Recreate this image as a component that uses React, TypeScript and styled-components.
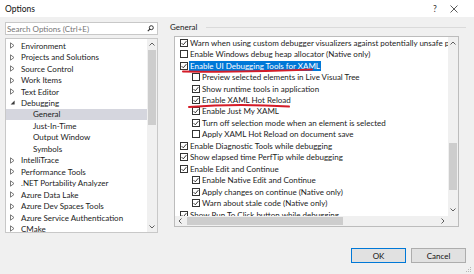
import * as React from 'react';
import styled, { createGlobalStyle } from 'styled-components';

const GlobalStyle = createGlobalStyle`
  html, body {
    margin: 0;
    padding: 0;
  }
  body {
    font-family: Lato, "Liberation Sans", sans-serif;
    background: #f0f0f0;
  }
`;

const Window = styled.div`
  position: relative;
  width: 474px;
  height: 274px;
  background: #f0f0f0;
  display: flex;
  flex-direction: column;
  overflow: hidden;
  font-size: 8px;
  color: #1b1b1b;
`;

const TitleBar = styled.div`
  height: 17px;
  flex: none;
  background: #fff;
  display: flex;
  align-items: center;
  padding: 0 13px 0 5px;
  font-size: 8.5px;
  color: #111;
`;

const TitleText = styled.span`
  flex: 1;
`;

const TitleButton = styled.span`
  width: 14px;
  height: 17px;
  display: flex;
  align-items: center;
  justify-content: center;
  color: #333;
  margin-left: 5px;
`;

const Body = styled.div`
  display: flex;
  align-items: flex-start;
  padding: 5px 8px 0 5px;
`;

const LeftPane = styled.div`
  width: 153px;
  flex: none;
  display: flex;
  flex-direction: column;
  gap: 3px;
`;

const SearchBox = styled.div`
  height: 13px;
  box-sizing: border-box;
  border: 1px solid #c8c8c8;
  background: #fff;
  display: flex;
  align-items: center;
  justify-content: space-between;
  padding: 0 3px 0 1px;
  color: #767676;
`;

const TreeBox = styled.div`
  height: 195px;
  box-sizing: border-box;
  border: 1px solid #c8c8c8;
  background: #fff;
  display: grid;
  grid-template-columns: 1fr 10px;
`;

const TreeList = styled.div`
  overflow: hidden;
  padding-top: 1px;
`;

const TreeRow = styled.div<{ $level: number; $selected?: boolean }>`
  height: 11.46px;
  display: flex;
  align-items: center;
  gap: 6px;
  padding-left: ${p => 4 + p.$level * 12}px;
  background: ${p => (p.$selected ? '#d5d6de' : 'transparent')};
  white-space: nowrap;
  line-height: 10px;
`;

const Expander = styled.span`
  width: 5px;
  height: 7px;
  flex: none;
  display: flex;
  align-items: center;
`;

const VScroll = styled.div`
  display: flex;
  flex-direction: column;
  background: #f0f0f0;
`;

const HScroll = styled.div`
  display: flex;
  background: #f0f0f0;
`;

const ScrollButton = styled.div<{ $size: number }>`
  flex: 0 0 ${p => p.$size}px;
  display: flex;
  align-items: center;
  justify-content: center;
`;

const Track = styled.div<{ $horizontal?: boolean }>`
  flex: 1;
  display: flex;
  flex-direction: ${p => (p.$horizontal ? 'row' : 'column')};
  overflow: hidden;
`;

const Thumb = styled.div<{ $offset: number; $length: number; $horizontal?: boolean }>`
  flex: none;
  background: #cdcdcd;
  ${p =>
    p.$horizontal
      ? `margin: 1px 0 1px ${p.$offset}px; width: ${p.$length}px;`
      : `margin: ${p.$offset}px 1px 0 1px; height: ${p.$length}px;`}
`;

const Corner = styled.div`
  background: #f0f0f0;
`;

const RightPane = styled.div`
  flex: 1;
  margin-left: 12px;
  display: flex;
  flex-direction: column;
  gap: 4px;
`;

const GroupHeader = styled.div`
  height: 10px;
  display: flex;
  align-items: center;
`;

const GroupLine = styled.div`
  flex: 1;
  margin: 1px 0 0 9px;
  border-top: 1px solid #dadada;
`;

const ListBox = styled.div`
  margin: 0 7px 0 4px;
  height: 191px;
  box-sizing: border-box;
  border: 1px solid #bcbcbc;
  background: #fff;
  display: grid;
  grid-template-columns: 1fr 10px;
  grid-template-rows: 1fr 10px;
`;

const CheckList = styled.div`
  overflow: hidden;
`;

const CheckRow = styled.div<{ $level: number }>`
  height: 11.46px;
  display: flex;
  align-items: center;
  gap: 1px;
  padding-left: ${p => 5 + p.$level * 12}px;
  white-space: nowrap;
`;

const Box = styled.span`
  width: 8px;
  height: 8px;
  box-sizing: border-box;
  border: 1px solid #333;
  background: #fff;
  flex: none;
  display: flex;
  align-items: center;
  justify-content: center;
`;

const Label = styled.span<{ $selected?: boolean }>`
  padding: 0 1px;
  line-height: 10px;
  background: ${p => (p.$selected ? '#0078d7' : 'transparent')};
  color: ${p => (p.$selected ? '#fff' : 'inherit')};
`;

const Footer = styled.div`
  display: flex;
  justify-content: flex-end;
  gap: 5px;
  padding: 15px 8px 0 0;
`;

const DialogButton = styled.button<{ $primary?: boolean }>`
  width: 55px;
  height: 15px;
  box-sizing: border-box;
  padding: 0;
  border: 1px solid ${p => (p.$primary ? '#0078d7' : '#adadad')};
  background: #e1e1e1;
  font-family: inherit;
  font-size: 8px;
  color: #111;
`;

const Overlay = styled.svg`
  position: absolute;
  top: 0;
  left: 0;
  pointer-events: none;
`;

type Dir = 'up' | 'down' | 'left' | 'right';

const chevronPaths: Record<Dir, string> = {
  up: 'M0.5 3.5 L3 1 L5.5 3.5',
  down: 'M0.5 0.5 L3 3 L5.5 0.5',
  left: 'M3.5 0.5 L1 3 L3.5 5.5',
  right: 'M0.5 0.5 L3 3 L0.5 5.5',
};

const Chevron = ({ dir }: { dir: Dir }) => {
  const vertical = dir === 'up' || dir === 'down';
  return (
    <svg width={vertical ? 6 : 4} height={vertical ? 4 : 6} viewBox={vertical ? '0 0 6 4' : '0 0 4 6'}>
      <path d={chevronPaths[dir]} stroke="#5f5f5f" strokeWidth="1" fill="none" />
    </svg>
  );
};

const CheckBox = ({ checked }: { checked: boolean }) => (
  <Box>
    {checked && (
      <svg width="6" height="6" viewBox="0 0 6 6">
        <path d="M0.6 3.1 L2.3 4.8 L5.4 1.1" stroke="#222" strokeWidth="0.9" fill="none" />
      </svg>
    )}
  </Box>
);

const treeItems = [
  { label: 'Environment', level: 0, state: 'closed' },
  { label: 'Projects and Solutions', level: 0, state: 'closed' },
  { label: 'Source Control', level: 0, state: 'closed' },
  { label: 'Work Items', level: 0, state: 'closed' },
  { label: 'Text Editor', level: 0, state: 'closed' },
  { label: 'Debugging', level: 0, state: 'open' },
  { label: 'General', level: 1, state: 'leaf', selected: true },
  { label: 'Just-In-Time', level: 1, state: 'leaf' },
  { label: 'Output Window', level: 1, state: 'leaf' },
  { label: 'Symbols', level: 1, state: 'leaf' },
  { label: 'IntelliTrace', level: 0, state: 'closed' },
  { label: 'Performance Tools', level: 0, state: 'closed' },
  { label: '.NET Portability Analyzer', level: 0, state: 'closed' },
  { label: 'Azure Data Lake', level: 0, state: 'closed' },
  { label: 'Azure Dev Spaces Tools', level: 0, state: 'closed' },
  { label: 'Azure Service Authentication', level: 0, state: 'closed' },
  { label: 'CMake', level: 0, state: 'closed' },
];

const options = [
  { label: 'Warn when using custom debugger visualizers against potentially unsafe processes (Managed only)', level: 0, checked: true },
  { label: 'Enable Windows debug heap allocator (Native only)', level: 0, checked: false },
  { label: 'Enable UI Debugging Tools for XAML', level: 0, checked: true, selected: true },
  { label: 'Preview selected elements in Live Visual Tree', level: 1, checked: false },
  { label: 'Show runtime tools in application', level: 1, checked: true },
  { label: 'Enable XAML Hot Reload', level: 1, checked: true },
  { label: 'Enable Just My XAML', level: 1, checked: true },
  { label: 'Turn off selection mode when an element is selected', level: 1, checked: true },
  { label: 'Apply XAML Hot Reload on document save', level: 1, checked: false },
  { label: 'Enable Diagnostic Tools while debugging', level: 0, checked: true },
  { label: 'Show elapsed time PerfTip while debugging', level: 0, checked: true },
  { label: 'Enable Edit and Continue', level: 0, checked: true },
  { label: 'Enable Native Edit and Continue', level: 1, checked: true },
  { label: 'Apply changes on continue (Native only)', level: 1, checked: true },
  { label: 'Warn about stale code (Native only)', level: 1, checked: true },
  { label: 'Show Run To Click button while debugging', level: 0, checked: true },
];

const ExpanderIcon = ({ state }: { state: string }) => {
  if (state === 'closed') {
    return (
      <svg width="5" height="7" viewBox="0 0 5 7">
        <path d="M0.5 0.8 L4 3.5 L0.5 6.2 Z" stroke="#6b6b6b" strokeWidth="0.9" fill="none" />
      </svg>
    );
  }
  if (state === 'open') {
    return (
      <svg width="5" height="7" viewBox="0 0 5 7">
        <path d="M4.6 1.6 L4.6 5.6 L0.6 5.6 Z" fill="#3a3a3a" />
      </svg>
    );
  }
  return null;
};

const App: React.FC = () => {
  return (
    <Window>
      <GlobalStyle />
      <TitleBar>
        <TitleText>Options</TitleText>
        <TitleButton>?</TitleButton>
        <TitleButton>
          <svg width="8" height="8" viewBox="0 0 8 8">
            <path d="M0.5 0.5 L7.5 7.5 M7.5 0.5 L0.5 7.5" stroke="#333" strokeWidth="0.8" />
          </svg>
        </TitleButton>
      </TitleBar>

      <Body>
        <LeftPane>
          <SearchBox>
            <span>Search Options (Ctrl+E)</span>
            <svg width="7" height="7" viewBox="0 0 7 7">
              <circle cx="4.3" cy="2.7" r="2" stroke="#333" strokeWidth="1" fill="none" />
              <path d="M2.9 4.1 L0.8 6.2" stroke="#333" strokeWidth="1.2" />
            </svg>
          </SearchBox>
          <TreeBox>
            <TreeList>
              {treeItems.map(item => (
                <TreeRow key={item.label} $level={item.level} $selected={item.selected}>
                  <Expander>
                    <ExpanderIcon state={item.state} />
                  </Expander>
                  <span>{item.label}</span>
                </TreeRow>
              ))}
            </TreeList>
            <VScroll>
              <ScrollButton $size={10}>
                <Chevron dir="up" />
              </ScrollButton>
              <Track>
                <Thumb $offset={1} $length={75} />
              </Track>
              <ScrollButton $size={10}>
                <Chevron dir="down" />
              </ScrollButton>
            </VScroll>
          </TreeBox>
        </LeftPane>

        <RightPane>
          <GroupHeader>
            <span>General</span>
            <GroupLine />
          </GroupHeader>
          <ListBox>
            <CheckList>
              {options.map(opt => (
                <CheckRow key={opt.label} $level={opt.level}>
                  <CheckBox checked={opt.checked} />
                  <Label $selected={opt.selected}>{opt.label}</Label>
                </CheckRow>
              ))}
            </CheckList>
            <VScroll>
              <ScrollButton $size={12}>
                <Chevron dir="up" />
              </ScrollButton>
              <Track>
                <Thumb $offset={94} $length={47} />
              </Track>
              <ScrollButton $size={12}>
                <Chevron dir="down" />
              </ScrollButton>
            </VScroll>
            <HScroll>
              <ScrollButton $size={10}>
                <Chevron dir="left" />
              </ScrollButton>
              <Track $horizontal>
                <Thumb $horizontal $offset={2} $length={156} />
              </Track>
              <ScrollButton $size={10}>
                <Chevron dir="right" />
              </ScrollButton>
            </HScroll>
            <Corner />
          </ListBox>
        </RightPane>
      </Body>

      <Footer>
        <DialogButton $primary>OK</DialogButton>
        <DialogButton>Cancel</DialogButton>
      </Footer>

      {/* hand-drawn red underlines and the resize grip */}
      <Overlay width="474" height="274" viewBox="0 0 474 274">
        <path d="M183 71.4 Q250 72.4 312 69.6" stroke="#d41c28" strokeWidth="2" fill="none" strokeLinecap="round" />
        <path d="M189 107 Q238 103.2 289 106.6" stroke="#d41c28" strokeWidth="2" fill="none" strokeLinecap="round" />
        <g fill="#b8b8b8">
          <rect x="470" y="267" width="1" height="1" />
          <rect x="468" y="269" width="1" height="1" />
          <rect x="470" y="269" width="1" height="1" />
          <rect x="466" y="271" width="1" height="1" />
          <rect x="468" y="271" width="1" height="1" />
          <rect x="470" y="271" width="1" height="1" />
        </g>
      </Overlay>
    </Window>
  );
};

export default App;
